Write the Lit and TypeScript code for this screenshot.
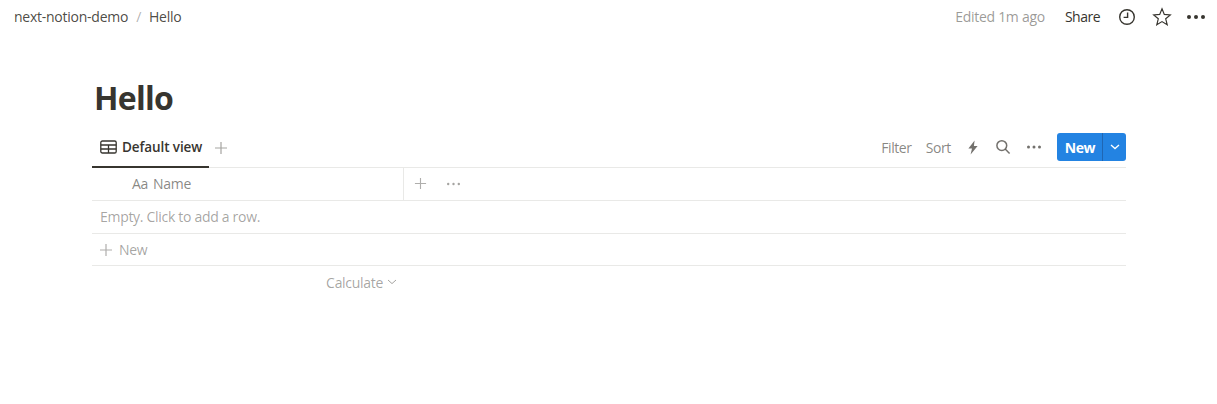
import { css, html, LitElement } from 'lit';
import { customElement } from 'lit/decorators.js';

@customElement('app-root')
export class AppRoot extends LitElement {
  static override styles = css`
    :host {
      display: block;
      height: 404px;
      background: #fff;
      font-family: 'Open Sans', 'Noto Sans', sans-serif;
      font-size: 14px;
      color: rgb(55, 53, 47);
      overflow: hidden;
    }
    svg { display: block; flex: none; }

    .topbar {
      display: flex;
      align-items: center;
      height: 33px;
      padding: 0 14px;
      letter-spacing: -0.25px;
    }
    .crumb { color: rgba(55, 53, 47, 0.9); }
    .slash { color: rgba(55, 53, 47, 0.4); margin: 0 8px; }
    .spacer { flex: 1; }
    .edited { color: rgba(55, 53, 47, 0.5); margin-right: 20px; letter-spacing: -0.28px; }
    .share { margin-right: 18px; letter-spacing: -0.5px; }
    .top-icons { display: flex; align-items: center; gap: 16px; margin-right: -2px; }
    .top-icons .dots { margin-left: -1px; }

    .page { margin: 0 91px 0 92px; }
    h1 {
      margin: 0;
      padding: 43px 0 0 2px;
      height: 57px;
      font-size: 32px;
      line-height: 44px;
      font-weight: 700;
      letter-spacing: -0.7px;
    }

    .toolbar {
      display: flex;
      align-items: stretch;
      height: 34px;
      border-bottom: 1px solid rgb(233, 233, 231);
    }
    .tab {
      display: flex;
      align-items: center;
      gap: 5px;
      box-sizing: border-box;
      width: 117px;
      height: 35px;
      padding: 0 0 6px 8px;
      border-bottom: 2px solid rgb(55, 53, 47);
      font-weight: 600;
      font-size: 13.5px;
      letter-spacing: -0.1px;
    }
    .tab-add { display: flex; align-items: center; margin: 0 0 4px 5px; }
    .actions {
      display: flex;
      align-items: center;
      gap: 16px;
      color: rgba(55, 53, 47, 0.6);
      letter-spacing: -0.4px;
      padding-bottom: 6px;
    }
    .filter { margin-right: -2px; }
    .new-btn {
      display: flex;
      align-items: stretch;
      height: 28px;
      border-radius: 3px;
      background: rgb(35, 131, 226);
      color: #fff;
      font-weight: 700;
      font-size: 14px;
      letter-spacing: -0.5px;
    }
    .new-label { display: flex; align-items: center; padding: 0 7px 0 8px; }
    .new-caret {
      display: flex;
      align-items: center;
      justify-content: center;
      width: 23px;
      border-left: 1px solid rgba(30, 90, 160, 0.7);
    }

    .row {
      display: flex;
      align-items: center;
      border-bottom: 1px solid rgb(233, 233, 231);
      color: rgba(55, 53, 47, 0.45);
      letter-spacing: -0.3px;
    }
    .head { height: 32px; }
    .name-cell {
      display: flex;
      align-items: center;
      gap: 5px;
      box-sizing: border-box;
      width: 312px;
      height: 100%;
      padding: 0 0 2px 40px;
      border-right: 1px solid rgb(233, 233, 231);
      color: rgba(55, 53, 47, 0.6);
    }
    .head-icons { display: flex; align-items: center; gap: 20px; padding: 0 0 1px 10px; }
    .empty { height: 31px; padding: 0 0 1px 8px; }
    .add { height: 31px; gap: 6px; padding-left: 7px; }
    .calc {
      display: flex;
      align-items: center;
      justify-content: flex-end;
      gap: 4px;
      box-sizing: border-box;
      width: 312px;
      height: 33px;
      padding: 0 7px 1px 0;
      color: rgba(55, 53, 47, 0.45);
      letter-spacing: -0.3px;
    }
  `;

  private plus(size: number, color: string) {
    return html`<svg width=${size} height=${size} viewBox="0 0 14 14" fill="none" stroke=${color} stroke-width="1.2">
      <path d="M7 1v12M1 7h12"></path>
    </svg>`;
  }

  private dots(w: number, r: number, color: string) {
    return html`<svg class="dots" width=${w} height="6" viewBox="0 0 ${w} 6" fill=${color}>
      <circle cx=${r} cy="3" r=${r}></circle>
      <circle cx=${w / 2} cy="3" r=${r}></circle>
      <circle cx=${w - r} cy="3" r=${r}></circle>
    </svg>`;
  }

  override render() {
    return html`
      <div class="topbar">
        <span class="crumb">next-notion-demo</span>
        <span class="slash">/</span>
        <span class="crumb">Hello</span>
        <span class="spacer"></span>
        <span class="edited">Edited 1m ago</span>
        <span class="share">Share</span>
        <div class="top-icons">
          <svg width="18" height="18" viewBox="0 0 18 18" fill="none" stroke="rgb(55,53,47)" stroke-width="1.4">
            <circle cx="9" cy="9" r="7.3"></circle>
            <path d="M9.6 4.4v5H5.6"></path>
          </svg>
          <svg width="20" height="20" viewBox="0 0 20 20" fill="none" stroke="rgb(55,53,47)" stroke-width="1.2" stroke-linejoin="miter">
            <path d="M10 1.8l2.3 5.6 6 .5-4.6 3.9 1.5 5.9L10 14.6l-5.2 3.1 1.5-5.9-4.6-3.9 6-.5z"></path>
          </svg>
          ${this.dots(18, 2, 'rgb(55,53,47)')}
        </div>
      </div>

      <div class="page">
        <h1>Hello</h1>

        <div class="toolbar">
          <div class="tab">
            <svg width="17" height="14" viewBox="0 0 17 14" fill="none" stroke="rgb(55,53,47)" stroke-width="1.3">
              <rect x="0.8" y="1" width="15.4" height="12" rx="1.6"></rect>
              <path d="M0.8 5h15.4M0.8 9h15.4M8.5 5v8"></path>
            </svg>
            <span>Default view</span>
          </div>
          <div class="tab-add">${this.plus(14, 'rgba(55,53,47,0.45)')}</div>
          <span class="spacer"></span>
          <div class="actions">
            <span class="filter">Filter</span>
            <span>Sort</span>
            <svg width="12" height="15" viewBox="0 0 12 15" fill="rgba(55,53,47,0.7)">
              <path d="M7.6 0.5L1.4 8.4h3.6L3.6 14.5l7-8.4H6.9z"></path>
            </svg>
            <svg width="16" height="16" viewBox="0 0 16 16" fill="none" stroke="rgba(55,53,47,0.7)" stroke-width="1.5">
              <circle cx="6.8" cy="6.6" r="4.9"></circle>
              <path d="M10.4 10.2l4.2 4.3"></path>
            </svg>
            ${this.dots(14, 1.5, 'rgba(55,53,47,0.7)')}
            <div class="new-btn">
              <span class="new-label">New</span>
              <span class="new-caret">
                <svg width="10" height="6" viewBox="0 0 10 6" fill="none" stroke="#fff" stroke-width="1.3">
                  <path d="M1 1l4 3.6L9 1"></path>
                </svg>
              </span>
            </div>
          </div>
        </div>

        <div class="row head">
          <div class="name-cell"><span>Aa</span><span>Name</span></div>
          <div class="head-icons">
            ${this.plus(13, 'rgba(55,53,47,0.4)')}
            ${this.dots(13, 1.2, 'rgba(55,53,47,0.45)')}
          </div>
        </div>
        <div class="row empty">Empty. Click to add a row.</div>
        <div class="row add">${this.plus(14, 'rgba(55,53,47,0.4)')}<span>New</span></div>
        <div class="calc">
          <span>Calculate</span>
          <svg width="10" height="6" viewBox="0 0 10 6" fill="none" stroke="rgba(55,53,47,0.45)" stroke-width="1">
            <path d="M1 1l4 3.6L9 1"></path>
          </svg>
        </div>
      </div>
    `;
  }
}
